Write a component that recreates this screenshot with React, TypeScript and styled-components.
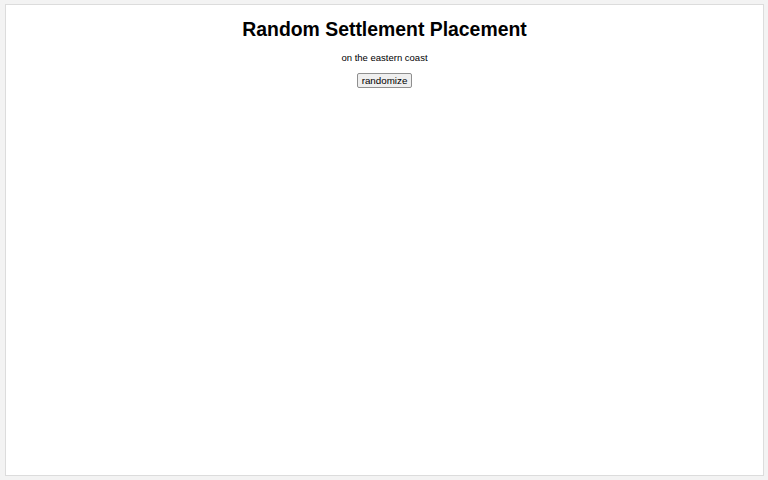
import styled, { createGlobalStyle } from "styled-components";

const GlobalStyle = createGlobalStyle`
  html, body {
    margin: 0;
    padding: 0;
    height: 100%;
    background: #f3f3f3;
    font-family: "Liberation Sans", Arial, sans-serif;
  }
  #root {
    height: 100%;
  }
`;

const Page = styled.div`
  box-sizing: border-box;
  height: 100%;
  padding: 4px 4px 4px 5px;
`;

const Card = styled.main`
  box-sizing: border-box;
  height: 100%;
  background: #fff;
  border: 1px solid #dcdcdc;
  display: flex;
  flex-direction: column;
  align-items: center;
  padding-top: 13px;
`;

const Title = styled.h1`
  margin: 0;
  font-size: 19.4px;
  font-weight: bold;
  color: #000;
  line-height: 22px;
`;

const Subtitle = styled.p`
  margin: 12px 0 0;
  font-size: 9.5px;
  line-height: 11px;
  color: #000;
`;

const Button = styled.button`
  margin-top: 10px;
  font-family: "Liberation Sans", Arial, sans-serif;
  font-size: 9.8px;
  line-height: 11px;
  padding: 1px 4px;
  background: #efefef;
  border: 1px solid #8f8f8f;
  border-radius: 2px;
  color: #000;
  cursor: pointer;
  &:hover {
    background: #e5e5e5;
  }
`;

export default function App() {
  return (
    <>
      <GlobalStyle />
      <Page>
        <Card>
          <Title>Random Settlement Placement</Title>
          <Subtitle>on the eastern coast</Subtitle>
          <Button>randomize</Button>
        </Card>
      </Page>
    </>
  );
}
